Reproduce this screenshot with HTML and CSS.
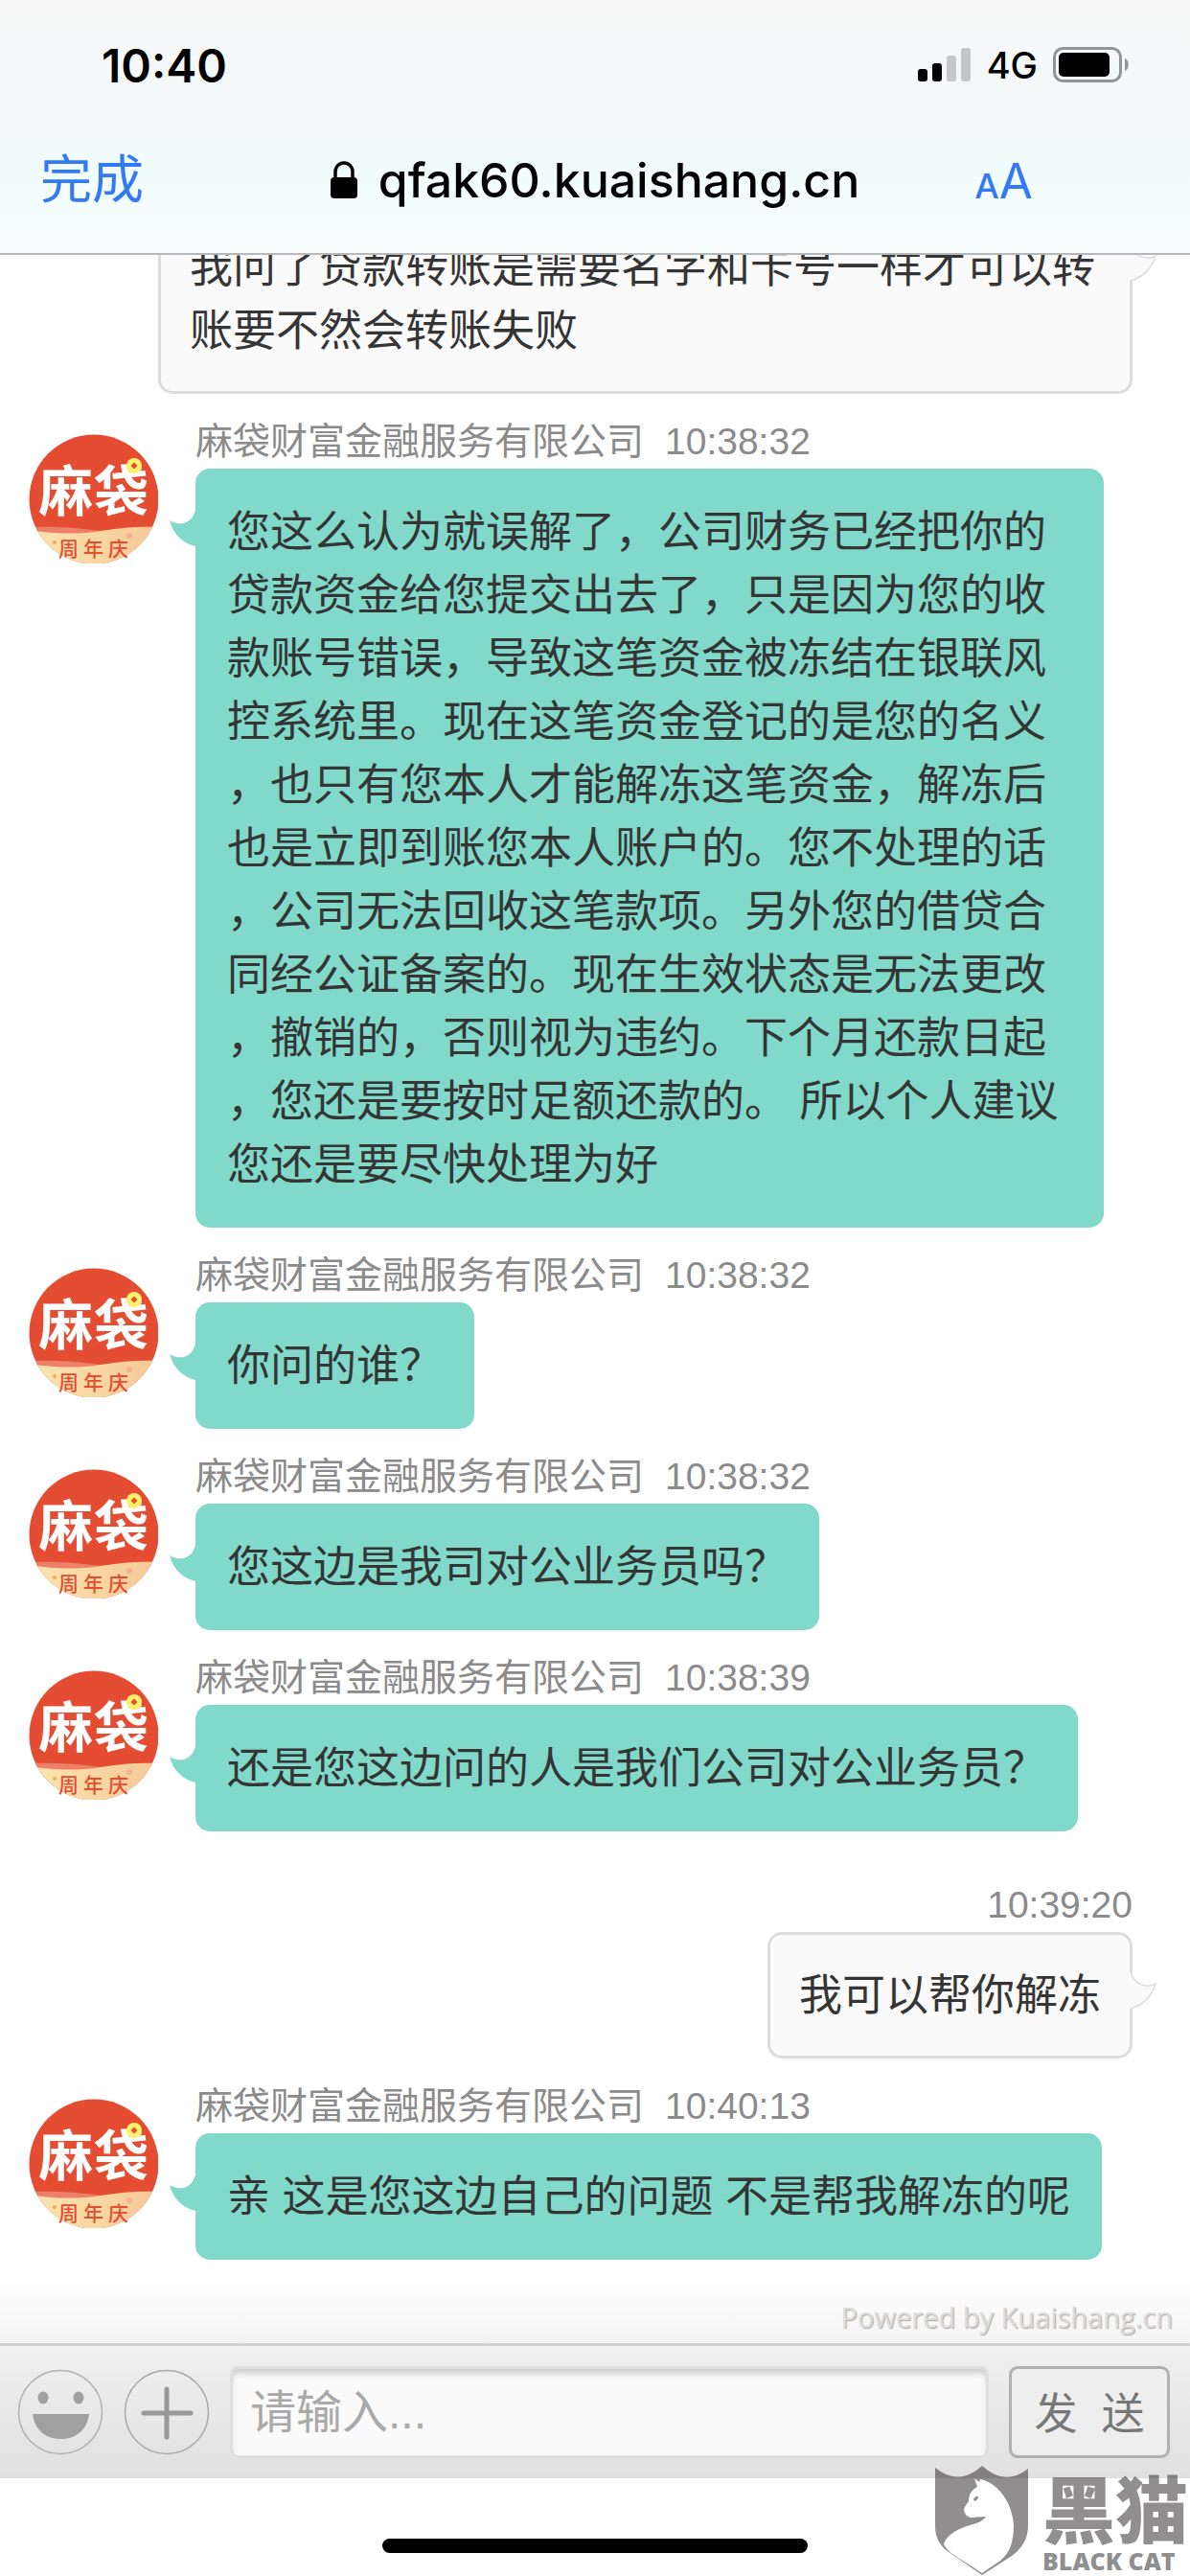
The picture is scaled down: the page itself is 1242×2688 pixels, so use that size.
FILE: index.html
```html
<!DOCTYPE html>
<html lang="zh-CN">
<head>
    <meta charset="UTF-8">
    <meta name="viewport" content="width=device-width, initial-scale=1.0">
    <title>qfak60.kuaishang.cn</title>
    <link rel="stylesheet" href="styles.css">
</head>
<body>
    <svg class="defs" aria-hidden="true">
        <defs>
            <linearGradient id="cream" x1="0" x2="1" y1="0" y2="0">
                <stop offset="0" stop-color="#fbe6b0"/>
                <stop offset="1" stop-color="#f5c896"/>
            </linearGradient>
            <clipPath id="round"><circle cx="68" cy="68" r="67.5"/></clipPath>
        </defs>
        <symbol id="avatar" viewBox="0 0 135 135">
            <g clip-path="url(#round)">
                <rect width="135" height="135" fill="#e44d31"/>
                <path d="M0 97C22 96 50 97 75 101L75 110H0z" fill="#ec8069"/>
                <path d="M0 100C22 104 52 105 75 101S118 96 135 97V135H0z" fill="url(#cream)"/>
                <circle cx="105" cy="106" r="3" fill="#f3b595"/>
                <circle cx="27" cy="113" r="2" fill="#f0a95a"/>
            </g>
            <text class="avatar-name" x="10 68" y="80">麻袋</text>
            <text class="avatar-sub" x="31 57 83" y="127">周年庆</text>
            <circle cx="110" cy="33" r="8" fill="#fdf26b"/>
            <path d="M110 29.500l3.500 3.500-3.500 3.500-3.500-3.500z" fill="#e44d31"/>
        </symbol>
        <symbol id="tail-left" viewBox="0 0 28 40">
            <path d="M28 0H27C24 14 11 18 0 11C4 26 14 35 27 38H28z" fill="#80d9ca"/>
        </symbol>
        <symbol id="tail-right" viewBox="0 0 30 42">
            <path d="M0 0H3C5 12 17 19 28 13C24 27 15 35 3 39H0z" fill="#fafafa"/>
            <path d="M2 0C5 12 17 19 28 13C24 27 15 35 2 39" fill="none" stroke="#dcdcdc" stroke-width="1.500"/>
        </symbol>
    </svg>

    <header class="header">
        <div class="status-bar">
            <span class="clock">10:40</span>
            <div class="status-icons">
                <svg width="56" height="36" viewBox="0 0 56 36">
                    <rect x="0" y="22" width="10" height="13" rx="3"/>
                    <rect x="15" y="16" width="10" height="19" rx="3"/>
                    <rect x="30" y="8" width="10" height="27" rx="3" fill="#c5c6c7"/>
                    <rect x="45" y="0" width="10" height="35" rx="3" fill="#c5c6c7"/>
                </svg>
                <span class="network">4G</span>
                <svg width="80" height="38" viewBox="0 0 80 38">
                    <rect x="1.500" y="1.500" width="69" height="34" rx="9" fill="none" stroke="#929495" stroke-width="3"/>
                    <rect x="6" y="6" width="53" height="25" rx="5"/>
                    <path d="M75 12c5 2 5 11 0 13z" fill="#929495"/>
                </svg>
            </div>
        </div>
        <div class="address-bar">
            <button class="done">完成</button>
            <div class="url">
                <svg width="28" height="40" viewBox="0 0 28 40">
                    <path d="M5 19V11a9 9 0 0 1 18 0v8" fill="none" stroke="#000" stroke-width="3.500"/>
                    <rect x="0" y="17" width="28" height="22" rx="4"/>
                </svg>
                <span>qfak60.kuaishang.cn</span>
            </div>
            <button class="text-size" aria-label="AA"><small>A</small>A</button>
        </div>
    </header>

    <main class="chat">
        <div class="message mine">
            <div class="bubble">
                我问了贷款转账是需要名字和卡号一样才可以转账要不然会转账失败
                <svg class="tail"><use href="#tail-right"/></svg>
            </div>
        </div>

        <div class="message">
            <svg class="avatar"><use href="#avatar"/></svg>
            <div class="content">
                <div class="meta"><span>麻袋财富金融服务有限公司</span><time>10:38:32</time></div>
                <div class="bubble">
                    您这么认为就误解了，公司财务已经把你的贷款资金给您提交出去了，只是因为您的收款账号错误，导致这笔资金被冻结在银联风控系统里。现在这笔资金登记的是您的名义，也只有您本人才能解冻这笔资金，解冻后也是立即到账您本人账户的。您不处理的话，公司无法回收这笔款项。另外您的借贷合同经公证备案的。现在生效状态是无法更改，撤销的，否则视为违约。下个月还款日起，您还是要按时足额还款的。 所以个人建议您还是要尽快处理为好
                    <svg class="tail"><use href="#tail-left"/></svg>
                </div>
            </div>
        </div>

        <div class="message">
            <svg class="avatar"><use href="#avatar"/></svg>
            <div class="content">
                <div class="meta"><span>麻袋财富金融服务有限公司</span><time>10:38:32</time></div>
                <div class="bubble">
                    你问的谁？
                    <svg class="tail"><use href="#tail-left"/></svg>
                </div>
            </div>
        </div>

        <div class="message">
            <svg class="avatar"><use href="#avatar"/></svg>
            <div class="content">
                <div class="meta"><span>麻袋财富金融服务有限公司</span><time>10:38:32</time></div>
                <div class="bubble">
                    您这边是我司对公业务员吗？
                    <svg class="tail"><use href="#tail-left"/></svg>
                </div>
            </div>
        </div>

        <div class="message">
            <svg class="avatar"><use href="#avatar"/></svg>
            <div class="content">
                <div class="meta"><span>麻袋财富金融服务有限公司</span><time>10:38:39</time></div>
                <div class="bubble">
                    还是您这边问的人是我们公司对公业务员？
                    <svg class="tail"><use href="#tail-left"/></svg>
                </div>
            </div>
        </div>

        <div class="message mine">
            <div class="meta"><time>10:39:20</time></div>
            <div class="bubble">
                我可以帮你解冻
                <svg class="tail"><use href="#tail-right"/></svg>
            </div>
        </div>

        <div class="message">
            <svg class="avatar"><use href="#avatar"/></svg>
            <div class="content">
                <div class="meta"><span>麻袋财富金融服务有限公司</span><time>10:40:13</time></div>
                <div class="bubble">
                    亲 这是您这边自己的问题 不是帮我解冻的呢
                    <svg class="tail"><use href="#tail-left"/></svg>
                </div>
            </div>
        </div>

        <div class="powered">Powered by Kuaishang.cn</div>
    </main>

    <form class="input-bar">
        <button type="button" class="icon-button" aria-label="表情">
            <svg width="90" height="90" viewBox="0 0 90 90">
                <circle cx="45" cy="45" r="43.500" fill="none" stroke="#b0b0b0" stroke-width="1.500"/>
                <ellipse cx="27" cy="30" rx="5.500" ry="6.500" fill="#a0a0a0"/>
                <ellipse cx="64" cy="30" rx="5.500" ry="6.500" fill="#a0a0a0"/>
                <path d="M16 47H75C73 63 62 73 45.500 73S18 63 16 47z" fill="#a0a0a0"/>
            </svg>
        </button>
        <button type="button" class="icon-button" aria-label="更多">
            <svg width="90" height="90" viewBox="0 0 90 90">
                <circle cx="45" cy="45" r="43.500" fill="none" stroke="#a8a8a8" stroke-width="1.500"/>
                <path d="M45 21V71M21 46H70" stroke="#989898" stroke-width="5" stroke-linecap="round"/>
            </svg>
        </button>
        <input type="text" class="text-input" aria-label="请输入" placeholder="请输入...">
        <button type="button" class="send">发&nbsp;&nbsp;送</button>
    </form>

    <footer class="home-area">
        <div class="home-indicator"></div>
    </footer>

    <div class="watermark">
        <svg width="98" height="115" viewBox="0 0 98 115">
            <path fill-rule="evenodd" d="M0 2Q25 22 49 0Q73 22 97 3V62C97 76 91 86 80 94L49 114L17 92C5 84 0 76 0 62zM41 13L44 22C38 25 35 30 35 37C32 41 30 44 30 46C31 51 34 54 38 54L53 53C48 60 41 60 33 63C20 67 10 75 9 82C13 89 18 92 24 96L49 112L68 99C78 91 82 79 82 62C81 42 68 18 47 14L46 17z"/>
            <path d="M40 35q2-4 5-3q0 4-4 5z"/>
        </svg>
        <div class="watermark-text">
            <span class="watermark-cn">黑猫</span>
            <span class="watermark-en">BLACK CAT</span>
        </div>
    </div>
</body>
</html>
```
FILE: styles.css
```css
* {
    box-sizing: border-box;
}
body {
    font-family: "Liberation Sans", "Noto Sans CJK SC", sans-serif;
    background-color: #fff;
    color: #353535;
    display: flex;
    flex-direction: column;
    height: 100vh;
    margin: 0;
    position: relative;
    overflow: hidden;
}
button {
    border: none;
    background: none;
    padding: 0;
    margin: 0;
    font-family: inherit;
    cursor: pointer;
}
svg {
    display: block;
    flex-shrink: 0;
}
.defs {
    position: absolute;
    width: 0;
    height: 0;
}

/* header */
.header {
    flex-shrink: 0;
    color: #000;
    font-family: Inter, "Noto Sans CJK SC", sans-serif;
    background: linear-gradient(#f7f7f7, #f5f8f9 30%, #f0fcfb 65%, #f6fffd);
    border-bottom: 2px solid #b4b8b8;
}
.status-bar {
    display: flex;
    justify-content: space-between;
    align-items: center;
    height: 136px;
    padding: 0 63px 0 106px;
}
.clock {
    font-size: 48px;
    font-weight: 600;
}
.status-icons {
    display: flex;
    align-items: center;
    gap: 16px;
}
.network {
    font-size: 38px;
    font-weight: 500;
}
.address-bar {
    display: grid;
    grid-template-columns: 1fr auto 1fr;
    align-items: center;
    height: 128px;
    padding-bottom: 24px;
}
.done, .text-size {
    color: #3379f6;
    justify-self: start;
}
.done {
    font-size: 54px;
    line-height: 72px;
    margin-left: 42px;
}
.url {
    display: flex;
    align-items: center;
    gap: 22px;
    font-size: 50px;
    font-weight: 500;
}
.text-size {
    font-size: 51px;
    margin-left: 120px;
}
.text-size small {
    font-size: 36px;
    font-weight: 500;
}

/* chat */
.chat {
    flex: 1;
    min-height: 0;
    overflow: hidden;
    display: flex;
    flex-direction: column;
    justify-content: flex-end;
}
.message {
    display: flex;
    flex-shrink: 0;
    align-items: flex-start;
    gap: 39px;
    padding: 0 90px 0 30px;
    margin-bottom: 21px;
}
.avatar {
    width: 135px;
    height: 135px;
    margin-top: 21px;
}
.avatar-name {
    font-family: "Noto Sans CJK SC", sans-serif;
    font-size: 57px;
    font-weight: 700;
    fill: #fff;
}
.avatar-sub {
    font-family: "Noto Sans CJK SC", sans-serif;
    font-size: 21px;
    font-weight: 500;
    fill: #e44d31;
}
.content {
    flex: 1;
    min-width: 0;
}
.meta {
    display: flex;
    gap: 22px;
    font-size: 39px;
    line-height: 57px;
    color: #8b8b8b;
}
.bubble {
    position: relative;
    width: fit-content;
    padding: 34px 33px 32px;
    border-radius: 15px;
    background-color: #80d9ca;
    font-size: 45px;
    line-height: 66px;
    line-break: anywhere;
}
.tail {
    position: absolute;
    top: 43px;
    left: -27px;
    width: 28px;
    height: 40px;
}
.mine {
    flex-direction: column;
    align-items: flex-end;
    gap: 0;
    padding: 0 60px 0 165px;
}
.message + .mine {
    margin-top: 27px;
}
.mine .bubble {
    padding: 31px 30px 29px;
    border: 3px solid #dcdcdc;
    background-color: #fafafa;
}
.mine .tail {
    top: 38px;
    left: auto;
    right: -29px;
    width: 30px;
    height: 42px;
}
.powered {
    flex-shrink: 0;
    height: 66px;
    padding: 15px 18px 0 0;
    background: linear-gradient(#fff, #f3f3f3);
    font-family: "Open Sans", sans-serif;
    font-size: 29px;
    line-height: 48px;
    text-align: right;
    color: #dcdcdc;
    text-shadow: 1px 1px 1px #aaa;
}

/* input bar */
.input-bar {
    flex-shrink: 0;
    display: flex;
    align-items: center;
    gap: 21px;
    padding: 21px 21px 21px 18px;
    border-top: 3px solid #d2d2d2;
    background: linear-gradient(#f0f0f0, #e0e0e0);
}
.text-input {
    flex: 1;
    min-width: 0;
    height: 96px;
    padding: 0 18px;
    border: 3px solid #dfdfdf;
    border-radius: 9px;
    background-color: #fafafa;
    box-shadow: inset 0 6px 6px -2px #c8c8c8;
    font-family: inherit;
    font-size: 48px;
    color: #353535;
}
.text-input::placeholder {
    color: #a9a9a9;
}
.send {
    width: 168px;
    height: 96px;
    padding-bottom: 4px;
    border: 3px solid #b0b0b0;
    border-radius: 9px;
    background-color: #eee;
    font-size: 45px;
    color: #777;
}

.home-area {
    flex-shrink: 0;
    padding: 63px 0 24px;
}
.home-indicator {
    width: 444px;
    height: 15px;
    margin: 0 auto;
    border-radius: 8px;
    background-color: #000;
}

/* stamp over the bottom right corner */
.watermark {
    position: absolute;
    right: 2px;
    bottom: 0;
    display: flex;
    gap: 14px;
    color: #231f20;
    fill: #231f20;
    opacity: 0.5;
}
.watermark-text {
    display: flex;
    flex-direction: column;
}
.watermark-cn {
    font-family: "Noto Sans CJK SC", sans-serif;
    font-size: 76px;
    font-weight: 900;
    line-height: 84px;
}
.watermark-en {
    font-family: "Open Sans", sans-serif;
    font-size: 25px;
    font-weight: 800;
    line-height: 30px;
    white-space: nowrap;
}
```
